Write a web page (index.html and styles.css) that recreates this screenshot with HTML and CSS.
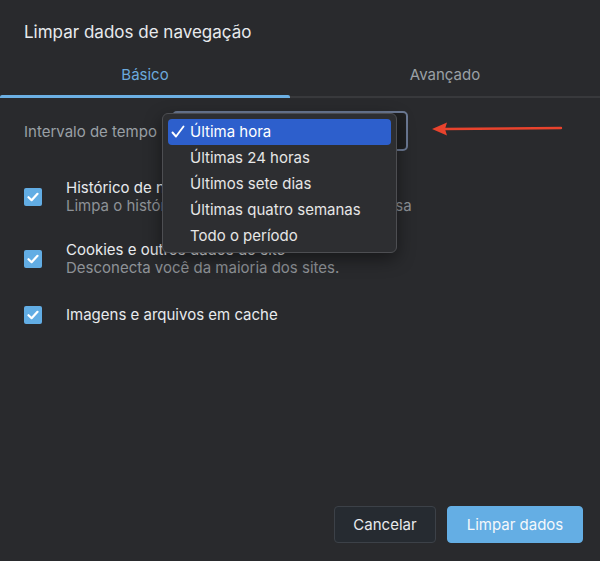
FILE: index.html
```html
<!DOCTYPE html>
<html lang="pt-BR">
<head>
<meta charset="utf-8">
<title>Limpar dados de navegação</title>
<link rel="stylesheet" href="styles.css">
</head>
<body>
<div class="dialog">
  <h1 class="title">Limpar dados de navegação</h1>
  <div class="tabs">
    <div class="tab active">Básico</div>
    <div class="tab">Avançado</div>
  </div>
  <div class="content">
    <div class="range-row">
      <span class="range-label">Intervalo de tempo</span>
      <div class="select-wrap">
        <div class="select"></div>
        <ul class="menu">
          <li class="menu-item selected"><svg class="check" width="14" height="14" viewBox="0 0 14 14"><path d="M1.5 7.5 L5 11.5 L12.5 1.5" fill="none" stroke="#fff" stroke-width="1.9" stroke-linecap="round" stroke-linejoin="round"/></svg>Última hora</li>
          <li class="menu-item">Últimas 24 horas</li>
          <li class="menu-item">Últimos sete dias</li>
          <li class="menu-item">Últimas quatro semanas</li>
          <li class="menu-item">Todo o período</li>
        </ul>
      </div>
      <svg class="arrow" width="132" height="14" viewBox="0 0 132 14">
        <line x1="12" y1="7" x2="129" y2="6" stroke="#e8432d" stroke-width="2.4" stroke-linecap="round"/>
        <path d="M0 7 L15 0.5 L13 7 L15 13.5 Z" fill="#e8432d"/>
      </svg>
    </div>
    <div class="options">
      <div class="option">
        <span class="box"><svg width="12" height="10" viewBox="0 0 12 10"><path d="M1.5 5.2 L4.6 8.2 L10.5 1.8" fill="none" stroke="#fff" stroke-width="2.2" stroke-linecap="round" stroke-linejoin="round"/></svg></span>
        <div class="texts">
          <div class="primary">Histórico de navegação</div>
          <div class="secondary">Limpa o histórico, inclusive na caixa de pesquisa</div>
        </div>
      </div>
      <div class="option">
        <span class="box"><svg width="12" height="10" viewBox="0 0 12 10"><path d="M1.5 5.2 L4.6 8.2 L10.5 1.8" fill="none" stroke="#fff" stroke-width="2.2" stroke-linecap="round" stroke-linejoin="round"/></svg></span>
        <div class="texts">
          <div class="primary">Cookies e outros dados do site</div>
          <div class="secondary">Desconecta você da maioria dos sites.</div>
        </div>
      </div>
      <div class="option single">
        <span class="box"><svg width="12" height="10" viewBox="0 0 12 10"><path d="M1.5 5.2 L4.6 8.2 L10.5 1.8" fill="none" stroke="#fff" stroke-width="2.2" stroke-linecap="round" stroke-linejoin="round"/></svg></span>
        <div class="texts">
          <div class="primary">Imagens e arquivos em cache</div>
        </div>
      </div>
    </div>
  </div>
  <div class="buttons">
    <button class="btn cancel">Cancelar</button>
    <button class="btn primary-btn">Limpar dados</button>
  </div>
</div>
</body>
</html>
```

FILE: styles.css
```css
* { box-sizing: border-box; }
html, body {
  margin: 0;
  padding: 0;
  background: #292a2d;
}
body {
  font-family: Inter, "Noto Sans", "Liberation Sans", sans-serif;
  color: #e8eaed;
}
.dialog {
  width: 600px;
  height: 561px;
  display: flex;
  flex-direction: column;
  background: #292a2d;
}
.title {
  margin: 0;
  padding: 20px 24px 0;
  font-size: 17px;
  font-weight: 400;
  line-height: 24px;
  color: #e8eaed;
}
.tabs {
  display: grid;
  grid-template-columns: 290px 1fr;
  margin-top: 10px;
  border-bottom: 2px solid #38393c;
}
.tab {
  text-align: center;
  font-size: 15px;
  line-height: 20px;
  padding: 11px 0 11px;
  color: #9aa0a6;
  position: relative;
}
.tab.active {
  color: #6ba9dc;
}
.tab.active::after {
  content: "";
  position: absolute;
  left: 0;
  right: 0;
  bottom: -2px;
  height: 3px;
  background: #6cb0e4;
  border-radius: 2px 2px 0 0;
}
.content {
  flex: 1;
  padding: 12px 0 0 24px;
}
.range-row {
  display: flex;
  align-items: center;
  height: 42px;
}
.range-label {
  font-size: 15px;
  color: #9aa0a6;
  width: 148px;
}
.select-wrap {
  position: relative;
  width: 236px;
  height: 40px;
}
.select {
  width: 236px;
  height: 40px;
  border: 2px solid #6c7a95;
  border-radius: 5px;
  background: #1f2022;
}
.menu {
  position: absolute;
  left: -10px;
  top: 2px;
  width: 235px;
  margin: 0;
  padding: 5px 5px 3px;
  list-style: none;
  background: #2d2e31;
  border: 1px solid #4d4e52;
  border-radius: 6px;
  box-shadow: 0 6px 18px rgba(0,0,0,0.45);
  z-index: 2;
}
.menu-item {
  position: relative;
  height: 26px;
  line-height: 26px;
  padding-left: 22px;
  font-size: 15px;
  color: #e6e6e6;
  border-radius: 4px;
}
.menu-item.selected {
  background: #2d5fcc;
  color: #ffffff;
}
.check {
  position: absolute;
  left: 3px;
  top: 6px;
}
.arrow {
  margin-left: 24px;
  margin-top: -4px;
}
.options {
  display: flex;
  flex-direction: column;
  margin-top: 27px;
  gap: 26px;
}
.option {
  display: flex;
  align-items: center;
}
.option.single {
  margin-top: 3px;
}
.box {
  width: 18px;
  height: 18px;
  border-radius: 2px;
  background: #62ade4;
  display: flex;
  align-items: center;
  justify-content: center;
  margin-right: 24px;
  flex-shrink: 0;
}
.primary {
  font-size: 15px;
  line-height: 18px;
  color: #e8eaed;
}
.secondary {
  font-size: 15px;
  line-height: 18px;
  color: #8e9297;
}
.buttons {
  display: flex;
  justify-content: flex-end;
  gap: 11px;
  padding: 0 17px 18px 0;
}
.btn {
  font-family: inherit;
  font-size: 15px;
  height: 37px;
  border-radius: 4px;
  cursor: default;
}
.cancel {
  width: 102px;
  background: #262b31;
  border: 1px solid #3c4148;
  color: #e8eaed;
}
.primary-btn {
  width: 136px;
  background: #64aee4;
  border: 1px solid #64aee4;
  color: #f4f8fb;
}
```
